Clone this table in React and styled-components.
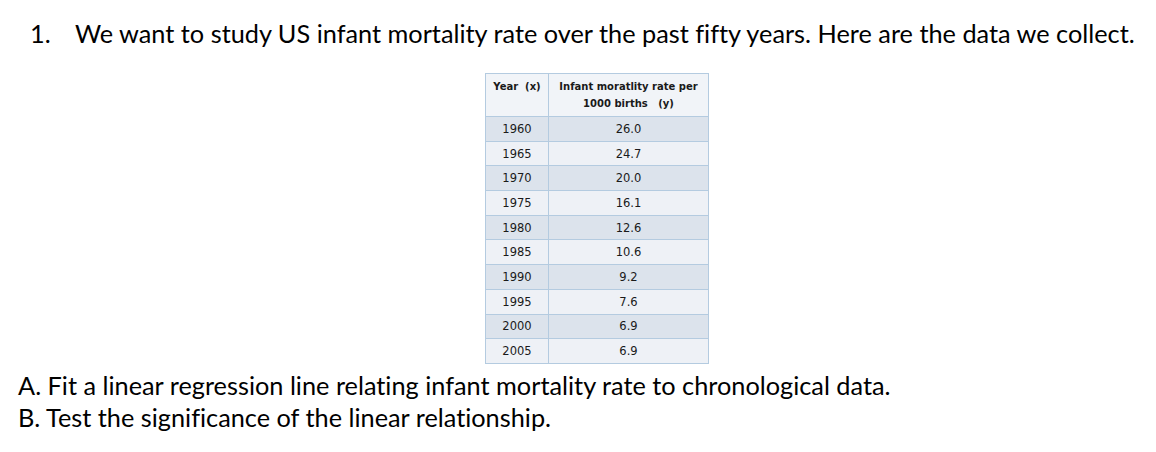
import React from 'react';
import styled, { createGlobalStyle } from 'styled-components';

const rows = [
  ['1960', '26.0'],
  ['1965', '24.7'],
  ['1970', '20.0'],
  ['1975', '16.1'],
  ['1980', '12.6'],
  ['1985', '10.6'],
  ['1990', '9.2'],
  ['1995', '7.6'],
  ['2000', '6.9'],
  ['2005', '6.9'],
];

const App = () => {
  return (
    <Page>
      <GlobalStyle />
      <Question>
        <Num>1.</Num>
        <span>We want to study US infant mortality rate over the past fifty years. Here are the data we collect.</span>
      </Question>
      <TableWrap>
        <Table>
          <thead>
            <tr>
              <HeadCell $w={63}>Year&nbsp; (x)</HeadCell>
              <HeadCell $w={160}>
                Infant moratlity rate per
                <br />
                1000 births &nbsp; (y)
              </HeadCell>
            </tr>
          </thead>
          <tbody>
            {rows.map(([year, rate], i) => (
              <Row key={year} $odd={i % 2 === 0}>
                <Cell>{year}</Cell>
                <Cell>{rate}</Cell>
              </Row>
            ))}
          </tbody>
        </Table>
      </TableWrap>
      <Parts>
        <Part>A. Fit a linear regression line relating infant mortality rate to chronological data.</Part>
        <Part>B. Test the significance of the linear relationship.</Part>
      </Parts>
    </Page>
  );
};

const GlobalStyle = createGlobalStyle`
  body {
    margin: 0;
    background: #fff;
    font-family: Lato, "Open Sans", sans-serif;
    font-variant-ligatures: none;
  }
`;

const Page = styled.div`
  width: 1156px;
  height: 452px;
  color: #000;
`;

const Question = styled.div`
  display: flex;
  padding: 17px 0 0 30px;
  font-size: 25.3px;
  line-height: 32px;
  white-space: nowrap;
`;

const Num = styled.span`
  width: 45px;
`;

const TableWrap = styled.div`
  padding: 24px 0 0 485px;
`;

const Table = styled.table`
  border-collapse: collapse;
  font-family: "DejaVu Sans", sans-serif;
  font-size: 11.5px;
  color: #1a1a1a;
  border: 1px solid #b4cbe0;
`;

const HeadCell = styled.th`
  width: ${(p) => p.$w}px;
  height: 43px;
  padding: 4px 0 0;
  background: #f1f4f8;
  border: 1px solid #b4cbe0;
  font-size: 10px;
  font-weight: bold;
  line-height: 17px;
  vertical-align: top;
  box-sizing: border-box;
`;

const Row = styled.tr`
  background: ${(p) => (p.$odd ? '#dce3ec' : '#eef1f6')};
`;

const Cell = styled.td`
  height: 23.7px;
  padding: 0;
  text-align: center;
  border: 1px solid #b4cbe0;
`;

const Parts = styled.div`
  padding: 5px 0 0 18px;
  font-size: 25.3px;
  line-height: 32px;
  white-space: nowrap;
`;

const Part = styled.div``;

export default App;
